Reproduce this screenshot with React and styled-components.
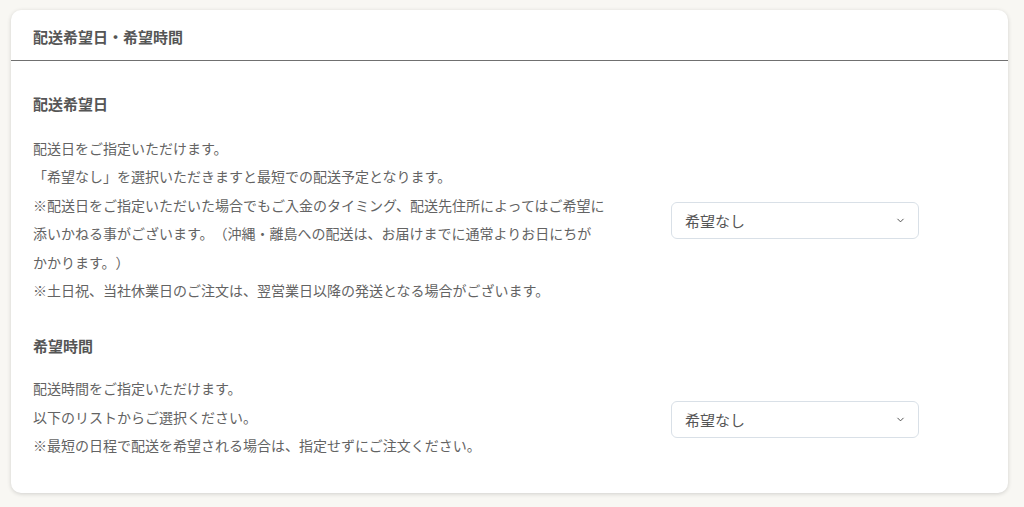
import React, { useState } from "react";
import styled, { createGlobalStyle } from "styled-components";
import { ChevronDown } from "lucide-react";

const GlobalStyle = createGlobalStyle`
  * {
    box-sizing: border-box;
  }
  body {
    margin: 0;
    background: #f8f7f3;
    font-family: "Noto Sans CJK JP", "Noto Sans", sans-serif;
    color: #555;
    text-spacing-trim: space-all;
  }
`;

const Page = styled.div`
  padding: 10px 16px 15px 11px;
`;

const Card = styled.section`
  background: #fff;
  border-radius: 10px;
  box-shadow: 0 1px 4px rgba(0, 0, 0, 0.16);
  overflow: hidden;
`;

const CardHeader = styled.header`
  height: 51px;
  padding: 16px 22px 0;
  border-bottom: 1px solid #707070;
  font-size: 15px;
  font-weight: 700;
  line-height: 22px;
  color: #555;
`;

const CardBody = styled.div`
  padding: 32px 22px 33px;
  display: flex;
  flex-direction: column;
  gap: 31px;
`;

const Section = styled.div`
  display: flex;
  flex-direction: column;
  gap: ${(p) => p.$gap || 18}px;
`;

const Title = styled.h3`
  margin: 0;
  font-size: 15px;
  font-weight: 700;
  line-height: 22px;
  color: #555;
`;

const Row = styled.div`
  display: grid;
  grid-template-columns: 638px 248px;
  align-items: center;
`;

const Notes = styled.div`
  font-size: 14px;
  line-height: 28.4px;
  color: #636363;
  white-space: nowrap;
`;

const Line = styled.p`
  margin: 0;
`;

const SelectWrap = styled.div`
  position: relative;
  width: 248px;
  height: 37px;
  margin-top: ${(p) => p.$shift || 0}px;
`;

const Select = styled.select`
  appearance: none;
  width: 100%;
  height: 100%;
  padding: 0 30px 0 13px;
  border: 1px solid #d9e0e7;
  border-radius: 6px;
  background: #fff;
  font-family: inherit;
  font-size: 15px;
  color: #555;
  outline: none;
`;

const Chevron = styled(ChevronDown)`
  position: absolute;
  right: 13px;
  top: 13px;
  color: #444;
  pointer-events: none;
`;

const options = ["希望なし"];

function ChoiceSelect({ value, onChange, choices, shift }) {
  return (
    <SelectWrap $shift={shift}>
      <Select value={value} onChange={(e) => onChange(e.target.value)}>
        {choices.map((c) => (
          <option key={c} value={c}>
            {c}
          </option>
        ))}
      </Select>
      <Chevron size={11} strokeWidth={2} />
    </SelectWrap>
  );
}

const App = () => {
  const [date, setDate] = useState("希望なし");
  const [time, setTime] = useState("希望なし");

  return (
    <Page>
      <GlobalStyle />
      <Card>
        <CardHeader>配送希望日・希望時間</CardHeader>
        <CardBody>
          <Section $gap={19}>
            <Title>配送希望日</Title>
            <Row>
              <Notes>
                <Line>配送日をご指定いただけます。</Line>
                <Line>「希望なし」を選択いただきますと最短での配送予定となります。</Line>
                <Line>※配送日をご指定いただいた場合でもご入金のタイミング、配送先住所によってはご希望に</Line>
                <Line>添いかねる事がございます。（沖縄・離島への配送は、お届けまでに通常よりお日にちが</Line>
                <Line>かかります。）</Line>
                <Line>※土日祝、当社休業日のご注文は、翌営業日以降の発送となる場合がございます。</Line>
              </Notes>
              <ChoiceSelect value={date} onChange={setDate} choices={options} shift={2} />
            </Row>
          </Section>
          <Section $gap={17}>
            <Title>希望時間</Title>
            <Row>
              <Notes>
                <Line>配送時間をご指定いただけます。</Line>
                <Line>以下のリストからご選択ください。</Line>
                <Line>※最短の日程で配送を希望される場合は、指定せずにご注文ください。</Line>
              </Notes>
              <ChoiceSelect value={time} onChange={setTime} choices={options} shift={4} />
            </Row>
          </Section>
        </CardBody>
      </Card>
    </Page>
  );
};

export default App;
